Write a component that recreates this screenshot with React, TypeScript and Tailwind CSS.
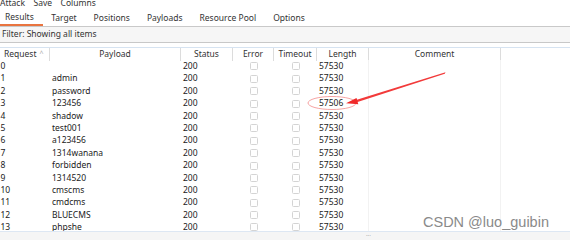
import React from "react";

const rows: [string, string][] = [
  ["0", ""],
  ["1", "admin"],
  ["2", "password"],
  ["3", "123456"],
  ["4", "shadow"],
  ["5", "test001"],
  ["6", "a123456"],
  ["7", "1314wanana"],
  ["8", "forbidden"],
  ["9", "1314520"],
  ["10", "cmscms"],
  ["11", "cmdcms"],
  ["12", "BLUECMS"],
  ["13", "phpshe"],
];

const cols = "grid grid-cols-[50px_131px_52px_41px_43px_52px_132px_1fr]";

function Box() {
  return <div className="w-[8px] h-[8px] border border-[#d4d4d4] rounded-[1.5px] bg-white" />;
}

export default function App() {
  return (
    <div
      className="relative w-[570px] h-[240px] overflow-hidden bg-white text-[8.5px] text-[#222] flex flex-col"
      style={{ fontFamily: '"Noto Sans", "Open Sans", sans-serif' }}
    >
      {/* menu */}
      <div className="h-[10px] overflow-hidden shrink-0">
        <div className="-mt-[3px] leading-[12px] flex gap-[8.5px] pl-[0px] text-[#333]">
          <span>Attack</span>
          <span>Save</span>
          <span>Columns</span>
        </div>
      </div>
      {/* tabs */}
      <div className="h-[17px] shrink-0 flex border-b border-[#c9c9c9] text-[#333]">
        <div className="h-[16px] pl-[5px] pr-[9px] flex items-center border-b-2 border-[#e9743f]">Results</div>
        <div className="h-[16px] px-[8.5px] flex items-center">Target</div>
        <div className="h-[16px] px-[8.5px] flex items-center">Positions</div>
        <div className="h-[16px] px-[8.5px] flex items-center">Payloads</div>
        <div className="h-[16px] px-[8.5px] flex items-center">Resource Pool</div>
        <div className="h-[16px] px-[8.5px] flex items-center">Options</div>
      </div>
      {/* filter */}
      <div className="h-[16px] shrink-0 bg-[#f6f6f6] border-b border-[#c8c8c8] flex items-center px-[2px] text-[#333]">
        Filter: Showing all items
      </div>
      <div className="h-[4px] shrink-0" />
      {/* header */}
      <div className={`${cols} h-[13px] shrink-0 border-t border-[#d6e3f1] text-[#333]`}>
        <div className="flex items-center pl-[4px] border-r border-[#dcdcdc] gap-[3px]">
          Request <span className="text-[#aaa] text-[7px]">^</span>
        </div>
        <div className="flex items-center justify-center border-r border-[#dcdcdc]">Payload</div>
        <div className="flex items-center justify-center border-r border-[#dcdcdc]">Status</div>
        <div className="flex items-center justify-center border-r border-[#dcdcdc]">Error</div>
        <div className="flex items-center justify-center border-r border-[#dcdcdc]">Timeout</div>
        <div className="flex items-center justify-center border-r border-[#dcdcdc]">Length</div>
        <div className="flex items-center justify-center border-r border-[#dcdcdc]">Comment</div>
        <div />
      </div>
      {/* body */}
      <div className="h-[171px] shrink-0 overflow-hidden">
        {rows.map(([n, p]) => (
          <div key={n} className={`${cols} h-[12.4px]`}>
            <div className="flex items-center pl-[0.5px]">{n}</div>
            <div className="flex items-center pl-[2px]">{p}</div>
            <div className="flex items-center pl-[2px]">200</div>
            <div className="flex items-center justify-center"><Box /></div>
            <div className="flex items-center justify-center"><Box /></div>
            <div className="flex items-center pl-[2px] border-r border-[#f2f2f2]">{n === "3" ? "57506" : "57530"}</div>
            <div className="border-r border-[#f2f2f2]" />
            <div />
          </div>
        ))}
      </div>
      {/* bottom */}
      <div className="flex-1 border-t border-[#dde7f3] bg-[#f5f5f5] flex justify-start pl-[366px] text-[#999] text-[6px] leading-[5px]">
        ...
      </div>

      {/* annotation overlay */}
      <svg className="absolute left-0 top-0 pointer-events-none" width="570" height="240">
        <ellipse cx="332" cy="103" rx="24" ry="6.5" fill="none" stroke="#f28b8b" strokeWidth="0.8" />
        <polygon points="445.5,72.2 444.8,73.8 356,102.6 355.2,100.2" fill="#f23a3a" />
        <polygon points="346,103.3 356.5,98 358.3,104.2" fill="#f02828" />
      </svg>
      <div
        className="absolute left-[423px] top-[213px] text-[14.5px] text-[#8a8a8a] leading-[18px]"
        style={{ fontFamily: '"Liberation Sans", Arial, sans-serif' }}
      >
        CSDN @luo_guibin
      </div>
    </div>
  );
}
